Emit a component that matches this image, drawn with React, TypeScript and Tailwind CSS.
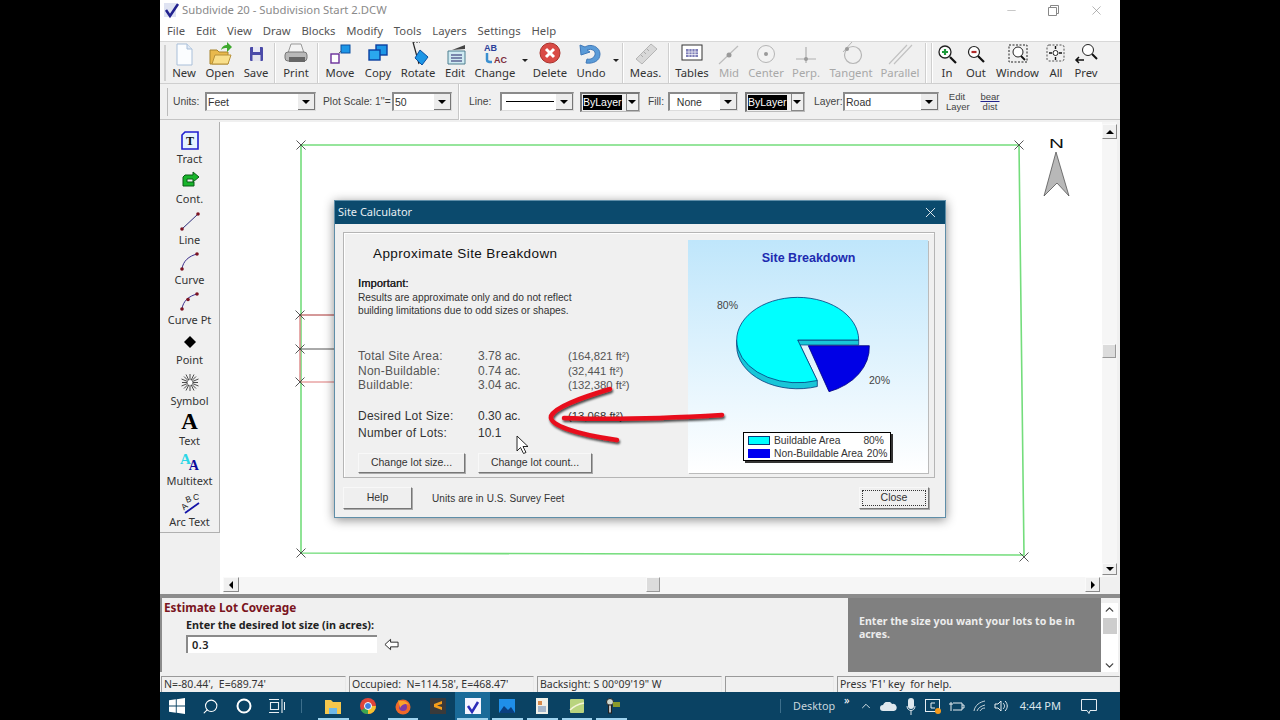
import React from "react";
import { ChevronUp, X, Search, Minus } from "lucide-react";

const seg = { fontFamily: '"Noto Sans", "Open Sans", sans-serif' };
const ar = { fontFamily: '"Liberation Sans", Arial, sans-serif' };

function Ic({ children, w = 26, h = 24 }: { children: React.ReactNode; w?: number; h?: number }) {
  return <svg width={w} height={h} viewBox={`0 0 ${w} ${h}`} className="block">{children}</svg>;
}

const icons: Record<string, React.ReactNode> = {
  New: <Ic><path d="M6 2h10l5 5v16H6z" fill="#fbfdff" stroke="#a9bfd9" /><path d="M16 2v5h5" fill="#dfe9f5" stroke="#a9bfd9" /></Ic>,
  Open: <Ic><path d="M3 8h7l2 2h9v12H3z" fill="#e9b94c" stroke="#a8842c" /><path d="M5 22l3-9h16l-3 9z" fill="#f9df8b" stroke="#b8923a" /><path d="M14 8c1-4 4-5 6-5V0l5 5-5 5V6c-2 0-4 0-6 2z" fill="#3fa92f" /></Ic>,
  Save: <Ic><rect x="7" y="5" width="13" height="14" rx="1" fill="#4a4aa8" /><rect x="10" y="5" width="7" height="5" fill="#e8e8f4" /><rect x="9.5" y="13" width="8" height="6" fill="#e4e4ee" /></Ic>,
  Print: <Ic w={28}><path d="M9 2h10l3 9H6z" fill="#f4f4f4" stroke="#999" /><rect x="3" y="10" width="22" height="9" rx="3" fill="#b9b9b9" stroke="#777" /><rect x="7" y="15" width="16" height="5" fill="#666" /></Ic>,
  Move: <Ic><rect x="14" y="3" width="9" height="8" fill="#1c96e6" stroke="#0a4fa0" /><rect x="4" y="12" width="8" height="9" fill="#fff" stroke="#6a2f9a" strokeWidth="1.4" /><path d="M12 11l2-2" stroke="#333" strokeDasharray="1 1" /></Ic>,
  Copy: <Ic><rect x="11" y="3" width="11" height="10" fill="#1c96e6" stroke="#0a3fa0" strokeWidth="1.4" /><rect x="4" y="8" width="11" height="10" fill="#2aa8ee" stroke="#0a3fa0" strokeWidth="1.4" /></Ic>,
  Rotate: <Ic><path d="M8 0l6 22" stroke="#222" strokeWidth="1.2" /><path d="M8 0h7" stroke="#222" strokeDasharray="2 1" /><path d="M15 8l8 7-6 8-7-7z" fill="#1c96e6" stroke="#0a4fa0" /></Ic>,
  Edit: <Ic><path d="M6 9h17v13H6z" fill="#cfeaf2" stroke="#4c7f8f" /><path d="M9 13h11M9 16h11M9 19h11" stroke="#226" /><path d="M10 8l13-5v4z" fill="#444" /></Ic>,
  Change: <Ic w={34}><text x="6" y="9" fontSize="9" fontWeight="700" fill="#2b3f9a" fontFamily="Liberation Sans">AB</text><text x="16" y="21" fontSize="9" fontWeight="700" fill="#7a2a3a" fontFamily="Liberation Sans">AC</text><path d="M9 11v7c0 2 2 2 5 2" stroke="#3a8fd0" strokeWidth="2.5" fill="none" /></Ic>,
  Delete: <Ic w={24}><circle cx="12" cy="11" r="10" fill="#d94a45" stroke="#a8322c" /><path d="M8 7l8 8M16 7l-8 8" stroke="#fff" strokeWidth="3" /></Ic>,
  Undo: <Ic w={28}><path d="M3 3l1 10 9-3-3-2c5-2 9 1 8 5-1 3-5 5-8 4l-1 4c7 1 14-2 14-9 0-7-9-11-15-7z" fill="#5a9bd8" stroke="#3f78b8" /></Ic>,
  "Meas.": <Ic w={28}><path d="M4 17L19 2l6 5-15 15z" fill="#d8d8d8" stroke="#b5b5b5" /><path d="M9 13l2 2M12 10l2 2M15 7l2 2" stroke="#aaa" /></Ic>,
  Tables: <Ic><rect x="3" y="3" width="20" height="15" fill="#fff" stroke="#333" /><path d="M7 7h12v8H7z" fill="#7e7eb8" /><path d="M10 7v8M13 7v8M16 7v8M7 10h12M7 12.500h12" stroke="#fff" strokeWidth=".7" /></Ic>,
  Mid: <Ic><path d="M3 22L22 4" stroke="#bdbdbd" strokeWidth="1.2" /><circle cx="13" cy="13" r="2.500" fill="#9a9a9a" /></Ic>,
  Center: <Ic><circle cx="13" cy="12" r="8.500" fill="#f2f2f2" stroke="#b5b5b5" /><circle cx="13" cy="12" r="2" fill="#9a9a9a" /></Ic>,
  "Perp.": <Ic><path d="M13 5v16M3 17h20" stroke="#b0b0b0" strokeWidth="1.200" /><circle cx="13" cy="17" r="2" fill="#9a9a9a" /></Ic>,
  Tangent: <Ic w={28}><circle cx="16" cy="13" r="8.500" fill="none" stroke="#b5b5b5" strokeWidth="1.200" /><path d="M6 10L15 0" stroke="#b5b5b5" /><circle cx="10" cy="7" r="2" fill="#9a9a9a" /></Ic>,
  Parallel: <Ic w={30}><path d="M4 22L22 3M9 22L27 3" stroke="#c2c2c2" strokeWidth="1.200" /></Ic>,
  In: <Ic><circle cx="11" cy="10" r="6" fill="#fff" stroke="#222" strokeWidth="1.300" /><path d="M11 7v6M8 10h6" stroke="#1d9a3a" strokeWidth="2.200" /><path d="M16 15l6 6" stroke="#111" strokeWidth="2.200" /></Ic>,
  Out: <Ic><circle cx="11" cy="10" r="5.500" fill="#fff" stroke="#222" strokeWidth="1.200" /><path d="M8.500 10h5" stroke="#b02a2a" strokeWidth="2.200" /><path d="M15 14l6 6" stroke="#111" strokeWidth="2.200" /></Ic>,
  Window: <Ic><rect x="4" y="3" width="18" height="17" fill="none" stroke="#222" strokeDasharray="2 1.500" /><circle cx="13" cy="10" r="5" fill="#fff" stroke="#222" /><path d="M16 14l4 4" stroke="#111" strokeWidth="1.800" /></Ic>,
  All: <Ic><rect x="4" y="3" width="17" height="16" rx="2" fill="none" stroke="#555" strokeDasharray="2 1.500" /><circle cx="12.500" cy="11" r="2.500" fill="#fff" stroke="#222" /><path d="M12.500 4v3M12.500 15v3M6 11h3M16 11h3" stroke="#111" strokeWidth="1.400" /></Ic>,
  Prev: <Ic><circle cx="15" cy="8" r="5.500" fill="#fff" stroke="#222" /><path d="M19 12l5 5" stroke="#111" strokeWidth="2" /><path d="M11 18H3M6 15l-3 3 3 3" stroke="#111" strokeWidth="1.500" fill="none" /></Ic>,
};

function Tool({ label, w, disabled }: { label: string; w: number; disabled?: boolean }) {
  return (
    <div className="flex flex-col items-center shrink-0" style={{ width: w }}>
      <div className="h-[23px] flex items-center justify-center">{icons[label]}</div>
      <span className={`text-[11.3px] leading-[16px] ${disabled ? "text-[#a8a8a8]" : "text-[#333]"}`}>{label}</span>
    </div>
  );
}
const Caret = ({ w = 12 }: { w?: number }) => (
  <div className="shrink-0 flex justify-center pt-[17px]" style={{ width: w }}>
    <div className="w-0 h-0 border-l-[3px] border-r-[3px] border-t-[3px] border-l-transparent border-r-transparent border-t-[#222]" />
  </div>
);
const Sep = ({ ml = 0 }: { ml?: number }) => <div className="w-[2px] h-[40px] bg-[#cfcfcf] border-r border-white shrink-0 self-center" style={{ marginLeft: ml }} />;

function Combo({ w, text, arrowW = 17 }: { w: number; text?: string; arrowW?: number }) {
  return (
    <div className="h-[19px] bg-white flex items-stretch shrink-0 border-t-2 border-l-2 border-[#8b8b8b] border-r border-b border-r-[#dcdcdc] border-b-[#dcdcdc]" style={{ width: w }}>
      <div className="flex-1 min-w-0 pl-[1px] flex items-center text-[10.5px] text-[#333] leading-none overflow-hidden" style={ar}>{text}</div>
      <div className="bg-[#ececec] border-r border-b border-[#777] flex items-center justify-center" style={{ width: arrowW }}>
        <div className="w-0 h-0 border-l-[4px] border-r-[4px] border-t-[4px] border-l-transparent border-r-transparent border-t-black" />
      </div>
    </div>
  );
}

function ByLayer({ w }: { w: number }) {
  return (
    <div className="h-[20px] flex items-stretch shrink-0 bg-[#efefef] border-t-2 border-l-2 border-[#777] border-r border-b border-r-[#bbb] border-b-[#bbb]" style={{ width: w }}>
      <div className="flex-1 m-[1px] mr-[4px] bg-black text-white text-[10.5px] flex items-center justify-center leading-none" style={ar}>ByLayer</div>
      <div className="w-[15px] border-r border-b border-l border-[#888] flex items-center justify-center">
        <div className="w-0 h-0 border-l-[4px] border-r-[4px] border-t-[4px] border-l-transparent border-r-transparent border-t-black" />
      </div>
    </div>
  );
}

const serif = { fontFamily: '"Liberation Serif", serif' };
const sideIcons: Record<string, React.ReactNode> = {
  Tract: <Ic w={20} h={20}><path d="M2 4l3-3h13v17H2z" fill="#e4f3ff" stroke="#1e1ed0" strokeWidth="1.600" /><text x="6" y="14" fontSize="12" fontWeight="700" fontFamily="Liberation Serif" fill="#111">T</text></Ic>,
  "Cont.": <Ic w={20} h={20}><path d="M5 4h8V1l6 5-6 5V8H7v3h7v4H3V6z" fill="#18b52b" stroke="#0b5d17" /></Ic>,
  Line: <Ic w={22} h={22}><path d="M3 19L19 4" stroke="#2d2d7a" /><circle cx="19" cy="4" r="1.800" fill="#7c1322" /><circle cx="3" cy="19" r="1.800" fill="#7c1322" /></Ic>,
  Curve: <Ic w={22} h={22}><path d="M3 19C4 11 10 6 18 4" stroke="#3a2d8a" fill="none" /><circle cx="18" cy="4" r="1.800" fill="#7c1322" /><circle cx="3" cy="19" r="1.800" fill="#7c1322" /></Ic>,
  "Curve Pt": <Ic w={22} h={22}><path d="M3 19C4 11 10 6 18 4" stroke="#3a2d8a" fill="none" /><circle cx="18" cy="4" r="1.800" fill="#7c1322" /><circle cx="9" cy="9.500" r="1.800" fill="#7c1322" /><circle cx="3" cy="19" r="1.800" fill="#7c1322" /></Ic>,
  Point: <Ic w={20} h={20}><path d="M10 4l6 6-6 6-6-6z" fill="#000" /></Ic>,
  Symbol: <Ic w={20} h={20}><path d="M10 1v17M2 9.500h16M4 3.500l12 12M16 3.500l-12 12M6 1.500l8 16M14 1.500l-8 16M1.500 6l17 7M18.500 6l-17 7" stroke="#222" strokeWidth=".8" /><circle cx="10" cy="9.500" r="2.500" fill="#fff" /></Ic>,
  Text: <span className="block text-[23px] font-bold text-black leading-none" style={serif}>A</span>,
  Multitext: <div className="flex items-end h-[24px] font-bold leading-none" style={serif}><span className="text-[15px] leading-none text-[#2ad6e6] mb-[6px]">A</span><span className="text-[14px] leading-none text-[#0a0a9a] -ml-[2px]">A</span></div>,
  "Arc Text": <Ic w={24} h={22}><text x="4" y="17" fontSize="8.500" fill="#222" transform="rotate(-40 7 15)" fontFamily="Liberation Sans">A</text><text x="8" y="10" fontSize="8.500" fill="#222" transform="rotate(-20 11 8)" fontFamily="Liberation Sans">B</text><text x="15" y="8" fontSize="8.500" fill="#222" fontFamily="Liberation Sans">C</text><path d="M7 21L21 11" stroke="#1414a8" strokeWidth="1.800" /></Ic>,
};

function SideBtn({ label }: { label: string }) {
  return (
    <div className="h-[40.3px] flex flex-col items-center shrink-0">
      <div className="h-[24px] flex items-end justify-center">{sideIcons[label]}</div>
      <span className="text-[11px] leading-[16px] text-[#333] whitespace-nowrap">{label}</span>
    </div>
  );
}

function Mark({ x, y }: { x: number; y: number }) {
  return <path d={`M${x - 4.500} ${y - 4.500}l9 9M${x + 4.500} ${y - 4.500}l-9 9`} stroke="#444" strokeWidth=".9" />;
}

function Btn({ w, h = 20, children, focus }: { w: number; h?: number; children: React.ReactNode; focus?: boolean }) {
  return (
    <div className="bg-[#efefef] border border-t-[#f8f8f8] border-l-[#f8f8f8] border-r-[#777] border-b-[#777] shadow-[1px_1px_0_#aaa] flex items-center justify-center text-[10.5px] text-[#333] relative shrink-0" style={{ width: w, height: h, ...ar }}>
      {focus && <div className="absolute inset-[2px] border border-dotted border-[#333]" />}
      {children}
    </div>
  );
}

function ScrollBtn({ dir, cls = "" }: { dir: "up" | "down" | "left" | "right"; cls?: string }) {
  const tri: Record<string, string> = {
    up: "border-l-[4px] border-r-[4px] border-b-[4px] border-l-transparent border-r-transparent border-b-black",
    down: "border-l-[4px] border-r-[4px] border-t-[4px] border-l-transparent border-r-transparent border-t-black",
    left: "border-t-[4px] border-b-[4px] border-r-[4px] border-t-transparent border-b-transparent border-r-black",
    right: "border-t-[4px] border-b-[4px] border-l-[4px] border-t-transparent border-b-transparent border-l-black",
  };
  return (
    <div className={`bg-[#f0f0f0] border border-t-[#fafafa] border-l-[#fafafa] border-r-[#8a8a8a] border-b-[#8a8a8a] flex items-center justify-center shrink-0 ${cls}`}>
      <div className={`w-0 h-0 ${tri[dir]}`} />
    </div>
  );
}

function PieChart() {
  return (
    <svg width="240" height="233" viewBox="688 240 240 233" className="absolute inset-0">
      <path d="M736.700 340v6A61 42.700 0 0 0 817.300 386.500v-5.500L797.700 340z" fill="#19c6d8" stroke="#063a7a" strokeWidth=".8" />
      <path d="M797.700 340v5h61v-5z" fill="#19c6d8" stroke="#063a7a" strokeWidth=".7" />
      <path d="M797.700 340H858.700A61 42.700 0 1 0 817.300 380.500z" fill="#00ffff" stroke="#063a7a" strokeWidth=".8" />
      <path d="M808.300 345.700H869.300A61 47 0 0 1 829 391.700z" fill="#0000e6" stroke="#03037a" strokeWidth=".8" />
      <text x="808.600" y="262" textAnchor="middle" fontSize="12.500" fontWeight="700" fill="#1d2bb0" fontFamily="Liberation Sans">Site Breakdown</text>
      <text x="717" y="309" fontSize="10.500" fill="#444" fontFamily="Liberation Sans">80%</text>
      <text x="869" y="384" fontSize="10.500" fill="#444" fontFamily="Liberation Sans">20%</text>
    </svg>
  );
}

function Row({ a, b, c, mt = 0, dark }: { a: string; b: string; c: React.ReactNode; mt?: number; dark?: boolean }) {
  return (
    <div className={`flex text-[12px] leading-[14.500px] ${dark ? "text-[#333]" : "text-[#555]"}`} style={{ marginTop: mt }}>
      <div className="w-[120px] tracking-[0.25px]">{a}</div>
      <div className="w-[90px]">{b}</div>
      <div className="text-[11.300px]">{c}</div>
    </div>
  );
}

function Dialog() {
  return (
    <div className="absolute left-[114px] top-[78px] w-[612px] h-[318px] bg-[#f0f0f0] border border-[#5f8ea8] shadow-[0_2px_10px_rgba(0,0,0,0.45)] flex flex-col" style={ar}>
      <div className="h-[23px] bg-[#0b4a6d] flex items-center justify-between pl-[3px] pr-[6px] pb-[1px] shrink-0 text-white" style={seg}>
        <span className="text-[11px] text-[#e8eef2]">Site Calculator</span>
        <X size={17} strokeWidth={1.200} color="#fff" />
      </div>
      <div className="ml-[8px] mr-[10px] mt-[8px] h-[246px] border border-[#b5b5b5] shadow-[inset_1px_1px_0_#fff] flex pt-[7px] pl-[14px] pr-[6px] pb-[4px]">
        <div className="w-[330px] shrink-0 flex flex-col">
          <div className="mt-[6px] ml-[15px] text-[13.500px] tracking-[0.4px] text-[#111] leading-[16px]">Approximate Site Breakdown</div>
          <div className="mt-[14px] text-[11px] tracking-[0.1px] text-[#222] leading-[14px]" style={{ fontWeight: 500, textShadow: "0.3px 0 0 #222" }}>Important:</div>
          <div className="mt-[1px] text-[10.200px] leading-[13px] text-[#333]">Results are approximate only and do not reflect<br />building limitations due to odd sizes or shapes.</div>
          <div className="mt-[32px]">
            <Row a="Total Site Area:" b="3.78 ac." c="(164,821 ft²)" />
            <Row a="Non-Buildable:" b="0.74 ac." c="(32,441 ft²)" />
            <Row a="Buildable:" b="3.04 ac." c="(132,380 ft²)" />
            <Row a="Desired Lot Size:" b="0.30 ac." c="(13,068 ft²)" mt={16} dark />
            <Row a="Number of Lots:" b="10.1" c="" mt={3} dark />
          </div>
          <div className="mt-[12px] flex gap-[13px]">
            <Btn w={107}>Change lot size...</Btn>
            <Btn w={114}>Change lot count...</Btn>
          </div>
        </div>
        <div className="relative w-[240px] h-[233px] bg-gradient-to-b from-[#bfe6fb] to-[#ffffff] shadow-[1px_1px_0_#bbb]">
          <PieChart />
          <div className="absolute left-[55px] top-[192px] w-[148px] h-[29px] bg-white border border-black shadow-[2px_2px_0_#333] pl-[4px] pr-[6px] py-[1px] text-[10.300px] text-[#333] leading-[13px]">
            <div className="flex items-center gap-[4px]"><span className="w-[22px] h-[9px] bg-[#00ffff] border border-[#063a7a] shrink-0" /><span className="flex-1">Buildable Area</span><span>80%</span></div>
            <div className="flex items-center gap-[4px]"><span className="w-[22px] h-[9px] bg-[#0000f0] shrink-0" /><span className="flex-1 whitespace-nowrap">Non-Buildable Area</span><span>20%</span></div>
          </div>
        </div>
      </div>
      <div className="flex items-center ml-[8px] mr-[16px] mt-[9px]">
        <Btn w={69} h={22}>Help</Btn>
        <span className="ml-[20px] text-[10px] text-[#333] tracking-[0.1px]">Units are in U.S. Survey Feet</span>
        <div className="flex-1" />
        <Btn w={70} h={22} focus>Close</Btn>
      </div>
    </div>
  );
}

function SB({ children, w, cls = "" }: { children?: React.ReactNode; w: number; cls?: string }) {
  return <div className={`h-[16px] border-t border-l border-[#9a9a9a] border-r border-r-[#e8e8e8] px-[2px] mr-[1px] text-[10.500px] leading-[15px] text-[#333] whitespace-nowrap overflow-hidden shrink-0 ${cls}`} style={{ width: w }}>{children}</div>;
}

const tbIcons: [string, React.ReactNode][] = [
  ["ex", <Ic w={18} h={16}><path d="M1 2h6l2 2h8v12H1z" fill="#f5c74d" /><rect x="5" y="10" width="8" height="6" fill="#6fb8e8" /></Ic>],
  ["ch", <Ic w={18} h={18}><circle cx="9" cy="9" r="8" fill="#e0453a" /><path d="M9 9L2 13.500A8 8 0 0 0 9 17z" fill="#3aa84f" /><path d="M9 9l0 8a8 8 0 0 0 8-8z" fill="#f4c430" /><circle cx="9" cy="9" r="3.500" fill="#3f7fe0" stroke="#fff" /></Ic>],
  ["ff", <Ic w={18} h={18}><circle cx="9" cy="10" r="7.500" fill="#f0682a" /><circle cx="9" cy="10" r="4" fill="#7a3ba8" /><path d="M4 3c2 2 8-1 11 5-3-2-7-1-9 3z" fill="#f9a32b" /></Ic>],
  ["sb", <Ic w={18} h={18}><rect x="1" y="1" width="16" height="16" fill="#3a3a3a" /><path d="M13 4L5 7v3l8 3-0 -3-5-1.500L13 7zM5 11l5 1" fill="#f59e1a" /></Ic>],
  ["sub", <Ic w={18} h={18}><rect x="1" y="1" width="16" height="16" fill="#f4f4ff" /><path d="M4 9l4 6 6-10" stroke="#2a2ab8" strokeWidth="2.500" fill="none" /></Ic>],
  ["ph", <Ic w={18} h={18}><rect x="1" y="2" width="16" height="14" fill="#1f8fe8" /><path d="M1 16l5-7 4 4 3-3 4 6z" fill="#0a3f80" /></Ic>],
  ["doc", <Ic w={16} h={18}><rect x="2" y="1" width="12" height="16" fill="#f0f0e8" /><rect x="4" y="4" width="4" height="4" fill="#d88a4a" /><path d="M4 10h8M4 12h8M4 14h8" stroke="#5a7fb0" /></Ic>],
  ["gr", <Ic w={18} h={18}><rect x="2" y="2" width="14" height="14" rx="1" fill="#b9d47e" /><path d="M2 13C7 8 11 7 16 6" stroke="#f4f4d8" strokeWidth="1.500" fill="none" /></Ic>],
  ["ky", <Ic w={18} h={18}><circle cx="7" cy="5" r="3.500" fill="#cfd8cf" stroke="#222" /><rect x="5.500" y="8" width="3" height="8" fill="#bbb" stroke="#222" /><rect x="10" y="5" width="7" height="5" fill="#8a9a2a" /></Ic>],
];

export default function App() {
  const line = "#74dd7c";
  return (
    <div className="w-[1280px] h-[720px] bg-black overflow-hidden flex justify-center" style={seg}>
      <div className="w-[960px] h-[720px] bg-[#f0f0f0] flex flex-col relative">
        {/* title */}
        <div className="h-[21px] bg-white flex items-center shrink-0">
          <svg width="18" height="16" viewBox="0 0 18 16" className="ml-[3px]"><rect x="1" y="0" width="12" height="14" fill="#dfe3f2" /><path d="M3 7l4 6 8-12" stroke="#23238f" strokeWidth="2.500" fill="none" /></svg>
          <span className="ml-[1px] text-[11.300px] text-[#8a8a8a]">Subdivide 20 - Subdivision Start 2.DCW</span>
          <div className="flex-1" />
          <Minus size={13} strokeWidth={1} color="#999" className="mr-[30px]" />
          <svg width="11" height="11" viewBox="0 0 11 11" className="mr-[30px]"><path d="M.5 2.500h8v8h-8zM2.500 2.500v-2h8v8h-2" fill="none" stroke="#888" /></svg>
          <X size={15} strokeWidth={1} color="#888" className="mr-[16px]" />
        </div>
        {/* menu */}
        <div className="h-[20px] bg-white flex items-center shrink-0 pl-[7px] text-[11.300px] text-[#555] gap-[10.900px]">
          {["File", "Edit", "View", "Draw", "Blocks", "Modify", "Tools", "Layers", "Settings", "Help"].map((m) => <span key={m}>{m}</span>)}
        </div>
        {/* toolbar 1 */}
        <div className="h-[43px] shrink-0 flex items-stretch bg-[#f0f0f0] border-t border-[#d8d8d8] border-b border-b-[#cfcfcf] pl-[4px]">
          <div className="w-[2px] h-[36px] self-center bg-[#d0d0d0] shrink-0" />
          <Tool label="New" w={36} /><Tool label="Open" w={36} /><Tool label="Save" w={36} />
          <Sep />
          <Tool label="Print" w={40} />
          <Sep ml={1} />
          <div className="w-[2px] shrink-0" />
          <Tool label="Move" w={38} /><Tool label="Copy" w={38} /><Tool label="Rotate" w={42} /><Tool label="Edit" w={32} /><Tool label="Change" w={48} />
          <Caret w={11} />
          <Tool label="Delete" w={40} />
          <div className="w-[2px] shrink-0" />
          <Tool label="Undo" w={38} />
          <Caret />
          <Sep />
          <Tool label="Meas." w={43} />
          <Sep ml={1} />
          <Tool label="Tables" w={44} /><Tool label="Mid" w={30} disabled /><Tool label="Center" w={44} disabled /><Tool label="Perp." w={36} disabled /><Tool label="Tangent" w={54} disabled /><Tool label="Parallel" w={44} disabled />
          <div className="w-[3px] shrink-0" />
          <Sep /><div className="w-[4px] shrink-0" /><Sep />
          <Tool label="In" w={28} /><Tool label="Out" w={30} /><Tool label="Window" w={53} /><Tool label="All" w={24} /><Tool label="Prev" w={36} />
        </div>
        {/* toolbar 2 */}
        <div className="h-[36px] shrink-0 flex items-center bg-[#f0f0f0] border-b border-[#c4c4c4] text-[10.300px] text-[#444]" style={ar}>
          <div className="w-[1px] h-[28px] ml-[7px] mr-[5px] bg-[#bbb] shrink-0" />
          <span className="w-[32px] shrink-0">Units:</span>
          <Combo w={111} text="Feet" />
          <span className="ml-[7px] w-[69px] shrink-0 whitespace-nowrap">Plot Scale: 1''=</span>
          <Combo w={60} text="50" />
          <div className="w-[2px] h-[36px] bg-[#c8c8c8] border-r border-white ml-[6px] mr-[9px] shrink-0" />
          <span className="w-[31px] shrink-0">Line:</span>
          <div className="relative"><Combo w={74} /><div className="absolute left-[6px] right-[20px] top-[9px] h-[1px] bg-black" /></div>
          <div className="ml-[6px]"><ByLayer w={60} /></div>
          <span className="ml-[8px] w-[20px] shrink-0">Fill:</span>
          <Combo w={70} text="&nbsp;&nbsp;None" />
          <div className="ml-[7px]"><ByLayer w={60} /></div>
          <span className="ml-[9px] w-[29px] shrink-0">Layer:</span>
          <Combo w={96} text="Road" />
          <div className="ml-[7px] text-[9.500px] leading-[10px] text-center text-[#444] w-[22px]">Edit<br />Layer</div>
          <div className="ml-[12px] text-[9.500px] leading-[10px] text-center text-[#444] w-[20px]"><span className="underline decoration-[#22228a]">bear</span><br />dist</div>
        </div>
        {/* main */}
        <div className="h-[472px] shrink-0 flex mt-[2px] bg-white">
          <div className="w-[60px] shrink-0 bg-[#f0f0f0] flex flex-col">
            <div className="h-[411px] shrink-0 pt-[5px] flex flex-col border-b border-r border-[#b0b0b0]">
              {["Tract", "Cont.", "Line", "Curve", "Curve Pt", "Point", "Symbol", "Text", "Multitext", "Arc Text"].map((l) => <SideBtn key={l} label={l} />)}
            </div>
            <div className="flex-1" />
          </div>
          <div className="flex-1 flex flex-col min-w-0">
            <div className="h-[455px] shrink-0 flex">
              <div className="w-[882px] shrink-0 relative bg-white">
                <svg className="absolute inset-0" width="880" height="455" viewBox="220 122 880 455">
                  <path d="M301 145L1019 145L1024 555L301 553Z" fill="none" stroke={line} strokeWidth="1.600" />
                  <path d="M300 315v67" stroke="#d88" strokeWidth="1.400" />
                  <path d="M300 315h40" stroke="#a33" />
                  <path d="M300 349h40" stroke="#555" />
                  <path d="M300 382h40" stroke="#d77" />
                  {[[301, 145], [1019, 145], [1024, 557], [301, 553], [300, 315], [300, 349], [300, 382]].map(([x, y]) => <Mark key={`${x}-${y}`} x={x} y={y} />)}
                  <path d="M1056 152l13 44-12-13-13 13z" fill="#b8b8b8" stroke="#444" strokeWidth=".7" />
                  <text x="1049" y="148" fontSize="13" textLength="15" lengthAdjust="spacingAndGlyphs" fill="#111" fontFamily="Liberation Sans">N</text>
                </svg>
                <Dialog />
              </div>
              <div className="w-[15px] shrink-0 bg-[#f6f6f6] flex flex-col">
                <ScrollBtn dir="up" cls="w-[15px] h-[15px] mt-[2px]" />
                <div className="mt-[205px] w-[14px] h-[14px] bg-[#dcdcdc] border border-t-[#fafafa] border-l-[#fafafa] border-r-[#999] border-b-[#999]" />
                <div className="flex-1" />
                <ScrollBtn dir="down" cls="w-[15px] h-[12px] mb-[2px]" />
              </div>
              <div className="flex-1 bg-[#f0f0f0]" />
            </div>
            <div className="h-[17px] shrink-0 bg-[#f6f6f6] flex">
              <div className="w-[3px] bg-white shrink-0" />
              <ScrollBtn dir="left" cls="w-[16px] h-[15px]" />
              <div className="ml-[407px] w-[14px] h-[15px] bg-[#dcdcdc] border border-t-[#fafafa] border-l-[#fafafa] border-r-[#999] border-b-[#999]" />
              <div className="flex-1" />
              <ScrollBtn dir="right" cls="w-[15px] h-[15px]" />
              <div className="w-[20px] bg-[#f0f0f0] shrink-0" />
            </div>
          </div>
        </div>
        {/* bottom panel */}
        <div className="h-[78px] shrink-0 border-t-[4px] border-[#8c8c8c] border-l-2 border-l-[#8c8c8c] flex bg-[#f0f0f0]">
          <div className="flex-1 min-w-0 pl-[2px]">
            <div className="mt-[1px] text-[11.800px] font-bold text-[#7a1420] leading-[16px]">Estimate Lot Coverage</div>
            <div className="mt-[2px] ml-[22px] text-[10.800px] font-bold text-[#222] leading-[16px]">Enter the desired lot size (in acres):</div>
            <div className="mt-[2px] ml-[22px] flex items-center">
              <div className="w-[191px] h-[18px] bg-white border-t-2 border-l-2 border-[#8a8a8a] pl-[4px] text-[11px] font-semibold text-[#222] leading-[16px] tracking-[0.5px]">0.3</div>
              <svg width="15" height="13" viewBox="0 0 16 13" className="ml-[7px]"><path d="M7 1L1 6.500 7 12V9h8V4H7z" fill="#fff" stroke="#222" /></svg>
            </div>
          </div>
          <div className="w-[253px] shrink-0 bg-[#808080] pl-[11px] pr-[20px] pt-[17px] text-[10.600px] font-bold leading-[13px] text-[#ececec]">Enter the size you want your lots to be in acres.</div>
          <div className="w-[19px] shrink-0 bg-[#f0f0f0] flex flex-col pt-[5px]">
            <div className="flex-1 bg-white flex flex-col items-center mr-[2px]">
              <ChevronUp size={13} strokeWidth={2.500} color="#444" />
              <div className="w-[14px] h-[16px] bg-[#cdcdcd] mt-[2px]" />
              <div className="flex-1" />
              <ChevronUp size={13} strokeWidth={2.500} color="#444" className="rotate-180" />
            </div>
          </div>
        </div>
        {/* status */}
        <div className="h-[20px] shrink-0 flex pl-[1px] bg-[#f0f0f0] items-end" style={seg}>
          <SB w={185}>N=-80.44',&nbsp;&nbsp;E=689.74'</SB>
          <SB w={185} cls="ml-[2px]">Occupied:&nbsp;&nbsp;N=114.58', E=468.47'</SB>
          <SB w={185} cls="ml-[2px]">Backsight: S 00°09'19" W</SB>
          <SB w={109} cls="ml-[2px]" />
          <SB w={283} cls="ml-[2px]">Press 'F1' key&nbsp;&nbsp;for help.</SB>
        </div>
        {/* taskbar */}
        <div className="h-[28px] shrink-0 bg-[#0a4263] flex items-center text-white relative">
          <svg width="16" height="16" viewBox="0 0 16 16" className="ml-[9px]"><path d="M0 2.300L6.800 1.300V7.600H0zM7.700 1.200L16 0V7.600H7.700zM0 8.400H6.800V14.700L0 13.700zM7.700 8.400H16V16L7.700 14.800z" fill="#fff" /></svg>
          <Search size={17} strokeWidth={1.500} color="#fff" className="ml-[17px] -scale-x-100" />
          <svg width="16" height="16" viewBox="0 0 16 16" className="ml-[17px]"><circle cx="8" cy="8" r="6.500" fill="none" stroke="#fff" strokeWidth="2" /></svg>
          <svg width="16" height="14" viewBox="0 0 16 14" className="ml-[17px]"><path d="M0 .500h10M0 13.500h10M1.500 3.500h8v7h-8zM13 0v14M15.500 3v8" fill="none" stroke="#e8eef2" strokeWidth="1.100" /></svg>
          <div className="w-[1px] h-[14px] bg-[#3d6f8c] ml-[16px]" />
          <div className="ml-[14px] flex items-stretch h-[28px]">
            {tbIcons.map(([k, ic]) => (
              <div key={k} className={`w-[34.800px] h-[28px] flex items-center justify-center relative ${k === "sub" ? "bg-[#1a6b99]" : ""}`}>
                {ic}
                <div className="absolute bottom-0 left-[2px] right-[2px] h-[2px] bg-[#9fd3ee]" style={{ display: k === "ch" || k === "sb" ? "none" : "block" }} />
              </div>
            ))}
          </div>
          <div className="flex-1" />
          <div className="w-[1px] h-[14px] bg-[#3d6f8c] mr-[12px]" />
          <span className="text-[10.800px] text-[#c9d6de] mr-[9px]">Desktop</span>
          <span className="text-[11px] leading-[10px] self-start mt-[3px] mr-[9px]">»</span>
          <ChevronUp size={14} strokeWidth={1.400} className="mr-[7.500px]" />
          <svg width="17" height="9" viewBox="0 0 17 9" className="mr-[8.500px]"><path d="M3 9a3 3 0 0 1 0-6 5 5 0 0 1 9-1 3.500 3.500 0 0 1 2 7z" fill="#dfe8ee" /></svg>
          <svg width="10" height="17" viewBox="0 0 10 17" className="mr-[9px]"><rect x="2" y="0" width="6" height="11" rx="3" fill="#dfe8ee" /><path d="M1 8c0 6 8 6 8 0M5 13v4" stroke="#dfe8ee" fill="none" /></svg>
          <svg width="16" height="15" viewBox="0 0 16 15" className="mr-[8px]"><rect x=".5" y=".5" width="14" height="12" fill="none" stroke="#e6edf2" /><path d="M10 4H6v5h4" stroke="#e6edf2" fill="none" /><circle cx="13" cy="12" r="3" fill="#f59a1c" /></svg>
          <svg width="16" height="11" viewBox="0 0 16 11" className="mr-[8.500px]"><path d="M4 2h9v7H4M13 4h2v3h-2M0 3h4M2 1v4M2 5v5" fill="none" stroke="#e6edf2" /></svg>
          <svg width="13" height="12" viewBox="0 0 13 12" className="mr-[8px]"><path d="M1 11C2 5 7 2 12 1M4 11c1-3 4-5 8-6M7 11c1-2 3-3 5-3" fill="none" stroke="#c4d2da" /></svg>
          <svg width="15" height="12" viewBox="0 0 15 12" className="mr-[10.500px]"><path d="M1 4h3l3-3v10L4 8H1zM9 3c2 2 2 4 0 6M11 1c3 3 3 7 0 10" fill="none" stroke="#e6edf2" /></svg>
          <span className="text-[11px] text-[#dde6ec] mr-[20px] whitespace-nowrap">4:44 PM</span>
          <svg width="16" height="15" viewBox="0 0 16 15" className="mr-[23px]"><path d="M.5.500h15v11H9l-1 3-2-3H.500z" fill="none" stroke="#e6edf2" /></svg>
        </div>
        {/* red annotation and cursor */}
        <svg className="absolute inset-0 pointer-events-none" width="960" height="720" viewBox="160 0 960 720">
          <defs><filter id="s" x="-10%" y="-30%" width="120%" height="170%"><feDropShadow dx="1" dy="2" stdDeviation="1.200" floodColor="#000" floodOpacity=".7" /></filter></defs>
          <g filter="url(#s)" fill="none" stroke="#e8101c" strokeLinecap="round">
            <path d="M564 418C610 420 670 418 722 415" strokeWidth="4.500" />
            <path d="M610 389C580 398 555 407 551 416C549 425 575 434 617 440" strokeWidth="4.500" />
          </g>
          <path d="M517 436v15l3.500-3.500 3 6 2.500-1-3-6h5z" fill="#fff" stroke="#111" strokeWidth=".9" />
        </svg>
      </div>
    </div>
  );
}
